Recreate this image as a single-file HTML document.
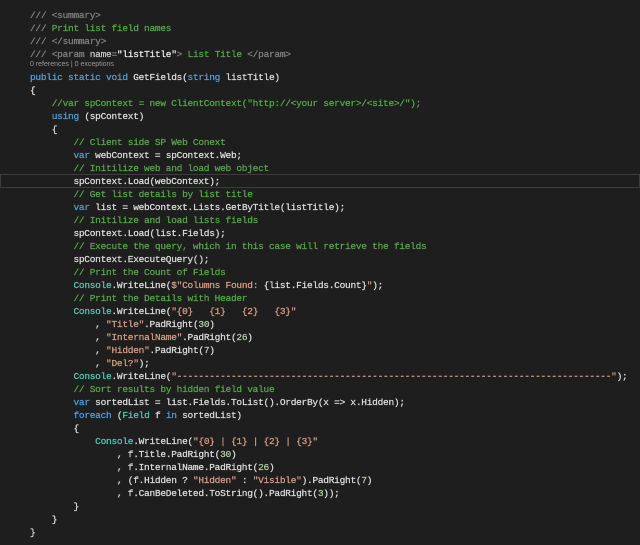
<!DOCTYPE html>
<html><head><meta charset="utf-8"><style>
html,body{margin:0;padding:0;background:#1e1e1e;width:640px;height:545px;overflow:hidden}
.l{position:absolute;left:0;height:13px;line-height:13px;white-space:pre;font-family:"Liberation Mono",monospace;font-size:9.5px;letter-spacing:-0.27px;color:#dcdcdc;-webkit-text-stroke:0.25px currentColor}
.c{color:#57a64a}.g{color:#808080}.k{color:#569cd6}.s{color:#d69d85}.t{color:#4ec9b0}.n{color:#b5cea8}.w{color:#e8e8e8}
.hl{position:absolute;left:0;top:174px;width:640px;height:14px;border:1px solid #3c3c3c;box-sizing:border-box}
.ref{position:absolute;left:30px;top:61px;font-family:"Liberation Sans",sans-serif;font-size:7px;color:#999;white-space:pre}
</style></head><body>
<div class="hl"></div>
<div class="l" style="top:9px;left:30px"><span class="g">/// &lt;summary&gt;</span></div>
<div class="l" style="top:22px;left:30px"><span class="g">///</span><span class="c"> Print list field names</span></div>
<div class="l" style="top:35px;left:30px"><span class="g">/// &lt;/summary&gt;</span></div>
<div class="l" style="top:48px;left:30px"><span class="g">/// &lt;param </span><span style="color:#c8c8c8">name</span><span class="g">=</span><span class="w">"listTitle"</span><span class="g">&gt;</span><span class="c"> List Title </span><span class="g">&lt;/param&gt;</span></div>
<div class="ref">0 references | 0 exceptions</div>
<div class="l" style="top:71px;left:30px"><span class="k">public static void</span> GetFields(<span class="k">string</span> listTitle)</div>
<div class="l" style="top:84px;left:30px">{</div>
<div class="l" style="top:97px;left:30px"><span class="c">    //var spContext = new ClientContext("http://&lt;your server&gt;/&lt;site&gt;/");</span></div>
<div class="l" style="top:110px;left:30px">    <span class="k">using</span> (spContext)</div>
<div class="l" style="top:123px;left:30px">    {</div>
<div class="l" style="top:136px;left:30px"><span class="c">        // Client side SP Web Conext</span></div>
<div class="l" style="top:149px;left:30px">        <span class="k">var</span> webContext = spContext.Web;</div>
<div class="l" style="top:162px;left:30px"><span class="c">        // Initilize web and load web object</span></div>
<div class="l" style="top:175px;left:30px">        spContext.Load(webContext);</div>
<div class="l" style="top:188px;left:30px"><span class="c">        // Get list details by list title</span></div>
<div class="l" style="top:201px;left:30px">        <span class="k">var</span> list = webContext.Lists.GetByTitle(listTitle);</div>
<div class="l" style="top:214px;left:30px"><span class="c">        // Initilize and load lists fields</span></div>
<div class="l" style="top:227px;left:30px">        spContext.Load(list.Fields);</div>
<div class="l" style="top:240px;left:30px"><span class="c">        // Execute the query, which in this case will retrieve the fields</span></div>
<div class="l" style="top:253px;left:30px">        spContext.ExecuteQuery();</div>
<div class="l" style="top:266px;left:30px"><span class="c">        // Print the Count of Fields</span></div>
<div class="l" style="top:279px;left:30px">        <span class="t">Console</span>.WriteLine(<span class="s">$"Columns Found: </span>{list.Fields.Count}<span class="s">"</span>);</div>
<div class="l" style="top:292px;left:30px"><span class="c">        // Print the Details with Header</span></div>
<div class="l" style="top:305px;left:30px">        <span class="t">Console</span>.WriteLine(<span class="s">"{0}   {1}   {2}   {3}"</span></div>
<div class="l" style="top:318px;left:30px">            , <span class="s">"Title"</span>.PadRight(<span class="n">30</span>)</div>
<div class="l" style="top:331px;left:30px">            , <span class="s">"InternalName"</span>.PadRight(<span class="n">26</span>)</div>
<div class="l" style="top:344px;left:30px">            , <span class="s">"Hidden"</span>.PadRight(<span class="n">7</span>)</div>
<div class="l" style="top:357px;left:30px">            , <span class="s">"Del?"</span>);</div>
<div class="l" style="top:370px;left:30px">        <span class="t">Console</span>.WriteLine(<span class="s">"--------------------------------------------------------------------------------"</span>);</div>
<div class="l" style="top:383px;left:30px"><span class="c">        // Sort results by hidden field value</span></div>
<div class="l" style="top:396px;left:30px">        <span class="k">var</span> sortedList = list.Fields.ToList().OrderBy(x =&gt; x.Hidden);</div>
<div class="l" style="top:409px;left:30px">        <span class="k">foreach</span> (<span class="t">Field</span> f <span class="k">in</span> sortedList)</div>
<div class="l" style="top:422px;left:30px">        {</div>
<div class="l" style="top:435px;left:30px">            <span class="t">Console</span>.WriteLine(<span class="s">"{0} | {1} | {2} | {3}"</span></div>
<div class="l" style="top:448px;left:30px">                , f.Title.PadRight(<span class="n">30</span>)</div>
<div class="l" style="top:461px;left:30px">                , f.InternalName.PadRight(<span class="n">26</span>)</div>
<div class="l" style="top:474px;left:30px">                , (f.Hidden ? <span class="s">"Hidden"</span> : <span class="s">"Visible"</span>).PadRight(<span class="n">7</span>)</div>
<div class="l" style="top:487px;left:30px">                , f.CanBeDeleted.ToString().PadRight(<span class="n">3</span>));</div>
<div class="l" style="top:500px;left:30px">        }</div>
<div class="l" style="top:513px;left:30px">    }</div>
<div class="l" style="top:526px;left:30px">}</div>
</body></html>
